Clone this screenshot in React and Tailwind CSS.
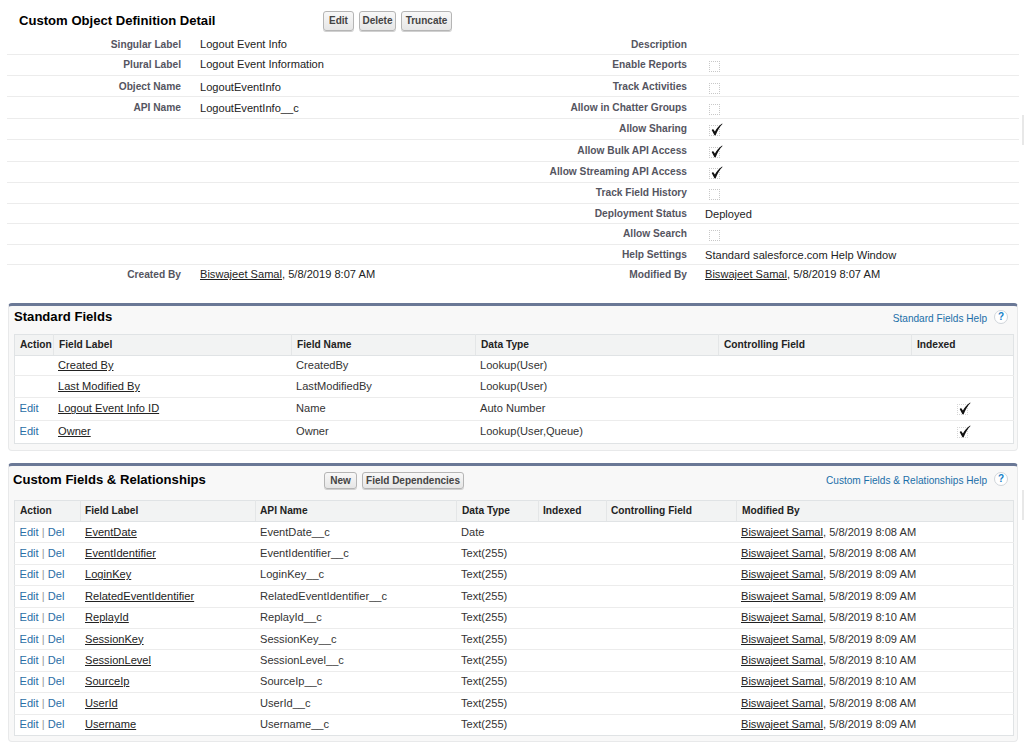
const Check = () => (
  <svg width="12" height="13" viewBox="0 0 14 14" preserveAspectRatio="none" className="absolute left-[1px] top-[-3px]">
    <path d="M0.8 7.6 L2.4 6.4 L4.6 9.2 C6.4 6 9.2 2.8 13 0.6 L13.4 1 C10 4.2 7.6 8 5.4 13.2 L4 13.2 Z" fill="#111" />
  </svg>
);
const Box = ({ checked }) => (
  <span className="relative inline-block w-[11px] h-[11px] border border-dotted border-[#c8c8c8] mt-[5px]">
    {checked && <Check />}
  </span>
);
const Name = ({ children }) => <span className="underline text-[#222] underline-offset-1">{children}</span>;
const B = <Name>Biswajeet Samal</Name>;

const detail = [
  ["h-[21px] pt-[2px]", "Singular Label", "Logout Event Info", "Description", null],
  ["h-[21px]", "Plural Label", "Logout Event Information", "Enable Reports", <Box />],
  ["h-[21px] pt-[2px]", "Object Name", "LogoutEventInfo", "Track Activities", <Box />],
  ["h-[22px] pt-[2px]", "API Name", "LogoutEventInfo__c", "Allow in Chatter Groups", <Box />],
  ["h-[21px]", "", "", "Allow Sharing", <Box checked />],
  ["h-[22px] pt-[2px]", "", "", "Allow Bulk API Access", <Box checked />],
  ["h-[21px]", "", "", "Allow Streaming API Access", <Box checked />],
  ["h-[21px]", "", "", "Track Field History", <Box />],
  ["h-[20px] pt-[2px]", "", "", "Deployment Status", "Deployed"],
  ["h-[21px]", "", "", "Allow Search", <Box />],
  ["h-[20px] pt-[2px]", "", "", "Help Settings", "Standard salesforce.com Help Window"],
  ["h-[20px]", "Created By", <>{B}, 5/8/2019 8:07 AM</>, "Modified By", <>{B}, 5/8/2019 8:07 AM</>],
];

const Btn = ({ children, className = "" }) => (
  <button className={`border border-[#b5b5b5] rounded-[3px] bg-gradient-to-b from-[#f8f8f8] to-[#e6e6e6] text-[10px] font-bold text-[#444] shadow-[0_1px_0_#d0d0d0] ${className}`}>
    {children}
  </button>
);

const Help = ({ children }) => (
  <div className="flex items-start gap-[7px] text-[10.1px] text-[#1b6fa8]">
    <span className="pt-[4px]">{children}</span>
    <span className="w-[14px] h-[14px] rounded-full bg-white border border-[#d0d5da] flex items-center justify-center text-[10px] font-bold text-[#1580c8]">?</span>
  </div>
);

const Th = ({ children, tight }) => (
  <th className={`text-left font-bold text-[10.2px] text-[#222] bg-[#f2f3f3] border-r border-[#e4e6e7] last:border-r-0 border-b border-b-[#e0e3e5] py-0 ${tight ? "pl-[4px]" : "pl-[5px]"}`}>
    {children}
  </th>
);
const Td = ({ children }) => <td className="p-0 pl-[4.5px] text-[#333] truncate">{children}</td>;
const Edit = ({ children }) => <span className="text-[#2a6ea6]">{children}</span>;

const standard = [
  ["h-[20px]", "", "Created By", "CreatedBy", "Lookup(User)", false],
  ["h-[22px]", "", "Last Modified By", "LastModifiedBy", "Lookup(User)", false],
  ["h-[23px]", "Edit", "Logout Event Info ID", "Name", "Auto Number", true],
  ["h-[23px]", "Edit", "Owner", "Owner", "Lookup(User,Queue)", true],
];
const custom = [
  ["EventDate", "Date", "8:08"],
  ["EventIdentifier", "Text(255)", "8:08"],
  ["LoginKey", "Text(255)", "8:09"],
  ["RelatedEventIdentifier", "Text(255)", "8:09"],
  ["ReplayId", "Text(255)", "8:10"],
  ["SessionKey", "Text(255)", "8:09"],
  ["SessionLevel", "Text(255)", "8:10"],
  ["SourceIp", "Text(255)", "8:10"],
  ["UserId", "Text(255)", "8:08"],
  ["Username", "Text(255)", "8:09"],
];

const Panel = ({ className, children }) => (
  <section className={`ml-[8px] w-[1010px] border border-[#e8e9ea] border-t-[3px] border-t-[#6a7896] rounded-[4px] bg-[#f8f8f8] ${className}`}>
    {children}
  </section>
);

export default function App() {
  return (
    <div className="w-[1024px] h-[746px] relative overflow-hidden bg-white text-[11.1px] leading-none text-[#222]" style={{ fontFamily: '"Liberation Sans", Arial, sans-serif' }}>
      <header className="h-[34px] flex items-start pl-[19px] pt-[11px]">
        <h1 className="w-[304px] text-[13.1px] font-bold text-black pt-[3px]">Custom Object Definition Detail</h1>
        <div className="flex gap-[5px]">
          <Btn className="w-[31px] h-[20px]">Edit</Btn>
          <Btn className="w-[37px] h-[20px]">Delete</Btn>
          <Btn className="w-[51px] h-[20px]">Truncate</Btn>
        </div>
      </header>
      <div className="ml-[7px] w-[1012px]">
        {detail.map(([h, l1, v1, l2, v2], i) => (
          <div key={i} className={`${h} grid grid-cols-[193px_300px_187px_1fr] items-center ${i < detail.length - 1 ? "border-b border-[#ececec]" : ""}`}>
            <div className="text-right pr-[19px] text-[10.2px] font-bold text-[#55555f]">{l1}</div>
            <div>{v1}</div>
            <div className="text-right text-[10.2px] font-bold text-[#55555f]">{l2}</div>
            <div className="pl-[18px]">
              {typeof v2 === "object" && v2 && v2.type === Box ? <span className="ml-[4px]">{v2}</span> : v2}
            </div>
          </div>
        ))}
      </div>

      <Panel className="mt-[18px] h-[148px]">
        <div className="h-[28px] pl-[5px] pr-[9px] pt-[4px] flex items-start justify-between">
          <h2 className="text-[13.1px] font-bold text-black">Standard Fields</h2>
          <Help>Standard Fields Help</Help>
        </div>
        <table className="ml-[5px] w-[999px] table-fixed border-collapse border border-[#e0e3e5] bg-white">
          <colgroup>
            <col className="w-[39px]" /><col className="w-[238px]" /><col className="w-[184px]" /><col className="w-[243px]" /><col className="w-[193px]" /><col className="w-[102px]" />
          </colgroup>
          <thead>
            <tr className="h-[21px]">
              <Th>Action</Th><Th>Field Label</Th><Th>Field Name</Th><Th>Data Type</Th><Th>Controlling Field</Th><Th>Indexed</Th>
            </tr>
          </thead>
          <tbody>
            {standard.map(([h, act, label, name, type, idx]) => (
              <tr key={label} className={`${h} border-b border-[#ececec] last:border-b-0`}>
                <Td><Edit>{act}</Edit></Td>
                <Td><Name>{label}</Name></Td>
                <Td>{name}</Td>
                <Td>{type}</Td>
                <Td></Td>
                <td className="p-0 pl-[45px]">{idx && <span className="relative inline-block w-[11px] h-[11px] border border-dotted border-[#d5d5d5] align-middle"><Check /></span>}</td>
              </tr>
            ))}
          </tbody>
        </table>
      </Panel>

      <Panel className="mt-[12px] h-[279px]">
        <div className="h-[34px] pl-[4px] pr-[9px] pt-[6px] flex items-start">
          <h2 className="w-[311px] text-[13.1px] font-bold text-black pt-[1px]">Custom Fields &amp; Relationships</h2>
          <div className="flex gap-[5px]">
            <Btn className="w-[33px] h-[17px]">New</Btn>
            <Btn className="w-[102px] h-[17px]">Field Dependencies</Btn>
          </div>
          <div className="ml-auto"><Help>Custom Fields &amp; Relationships Help</Help></div>
        </div>
        <table className="ml-[5px] w-[999px] table-fixed border-collapse border border-[#e0e3e5] bg-white">
          <colgroup>
            <col className="w-[66px]" /><col className="w-[175px]" /><col className="w-[201px]" /><col className="w-[82px]" /><col className="w-[68px]" /><col className="w-[130px]" /><col className="w-[277px]" />
          </colgroup>
          <thead>
            <tr className="h-[21px]">
              <Th>Action</Th><Th tight>Field Label</Th><Th tight>API Name</Th><Th>Data Type</Th><Th tight>Indexed</Th><Th tight>Controlling Field</Th><Th>Modified By</Th>
            </tr>
          </thead>
          <tbody>
            {custom.map(([n, t, time]) => (
              <tr key={n} className="h-[21.4px] border-b border-[#ececec] last:border-b-0">
                <Td><Edit>Edit</Edit> <span className="text-[#999]">|</span> <Edit>Del</Edit></Td>
                <Td><Name>{n}</Name></Td>
                <Td>{n}__c</Td>
                <Td>{t}</Td>
                <Td></Td>
                <Td></Td>
                <Td>{B}, 5/8/2019 {time} AM</Td>
              </tr>
            ))}
          </tbody>
        </table>
      </Panel>

      <div className="absolute right-0 top-[115px] w-[2px] h-[30px] bg-[#e8e8e8]" />
      <div className="absolute right-0 top-[490px] w-[2px] h-[30px] bg-[#e8e8e8]" />
    </div>
  );
}
